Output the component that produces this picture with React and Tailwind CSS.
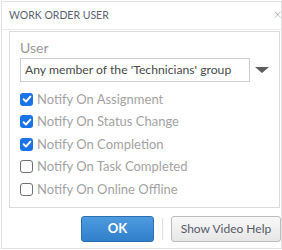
import { useState } from 'react'

// pilihan notifikasi buat user work order
const opsi = [
  { id: 'assign', label: 'Notify On Assignment', on: true },
  { id: 'status', label: 'Notify On Status Change', on: true },
  { id: 'done', label: 'Notify On Completion', on: true },
  { id: 'task', label: 'Notify On Task Completed', on: false },
  { id: 'online', label: 'Notify On Online Offline', on: false },
]

function Kotak({ on, onClick }) {
  if (on)
    return (
      <span onClick={onClick} className="w-[13px] h-[13px] rounded-[3px] bg-[#1a73e8] flex items-center justify-center shrink-0 cursor-pointer">
        <svg width="10" height="10" viewBox="0 0 10 10" fill="none">
          <path d="M1.6 5.2 4 7.5 8.4 2.6" stroke="white" strokeWidth="1.9" strokeLinecap="round" strokeLinejoin="round" />
        </svg>
      </span>
    )
  return <span onClick={onClick} className="w-[13px] h-[13px] rounded-[3px] border border-[#707070] bg-white shrink-0 cursor-pointer" />
}

export default function App() {
  const [cek, setCek] = useState(Object.fromEntries(opsi.map((o) => [o.id, o.on])))

  return (
    <div className="w-[282px] h-[250px] bg-white pt-px pl-px" style={{ fontFamily: 'Lato, "Open Sans", sans-serif' }}>
      <div className="w-[281px] h-[248px] border border-[#e2e2e2] flex flex-col">
        {/* judul */}
        <div className="h-[28px] border-b border-[#ebebeb] flex items-center justify-between pl-[7px] pr-0">
          <span className="text-[10.5px] text-[#5b6275]">WORK ORDER USER</span>
          <span className="text-[15px] leading-none text-[#a0a0a0] font-light -mr-[1px] -mt-[2px]">×</span>
        </div>

        {/* isi */}
        <div className="ml-[7px] mr-[1px] mt-px border border-[#dcdcdc] pl-[10px] pt-[8px] pb-[6px]">
          <p className="text-[14px] leading-[16px] text-[#9a9a9a]">User</p>
          <div className="flex items-center mt-[2px]">
            <div className="w-[230px] h-[24px] border border-[#cfcfcf] flex items-center pl-[4px] text-[12.2px] text-[#4a4a4a] whitespace-nowrap overflow-hidden">
              Any member of the 'Technicians' group
            </div>
            <svg width="14" height="6" viewBox="0 0 14 6" className="ml-[5px]">
              <path d="M0 0h14L7 6z" fill="#5c5c5c" />
            </svg>
          </div>
          <div className="mt-[6px] flex flex-col">
            {opsi.map((o) => (
              <div key={o.id} className="h-[22.5px] flex items-center gap-[4px]">
                <Kotak on={cek[o.id]} onClick={() => setCek({ ...cek, [o.id]: !cek[o.id] })} />
                <span className="text-[13px] text-[#a3a3a3] whitespace-nowrap">{o.label}</span>
              </div>
            ))}
          </div>
        </div>

        {/* tombol */}
        <div className="flex items-center mt-[8px]">
          <button className="ml-auto w-[73px] h-[26px] rounded-[3px] border border-[#2c6fb0] bg-gradient-to-b from-[#4f9be0] to-[#2f7fca] text-white text-[13px] font-bold">
            OK
          </button>
          <span className="w-px h-[22px] bg-[#e0e0e0] mx-[8px]" />
          <button className="w-[110px] h-[26px] rounded-[3px] border border-[#bcbcbc] bg-gradient-to-b from-[#f8f8f8] to-[#e6e6e6] text-[#555b66] text-[12px]">
            Show Video Help
          </button>
        </div>
      </div>
    </div>
  )
}
